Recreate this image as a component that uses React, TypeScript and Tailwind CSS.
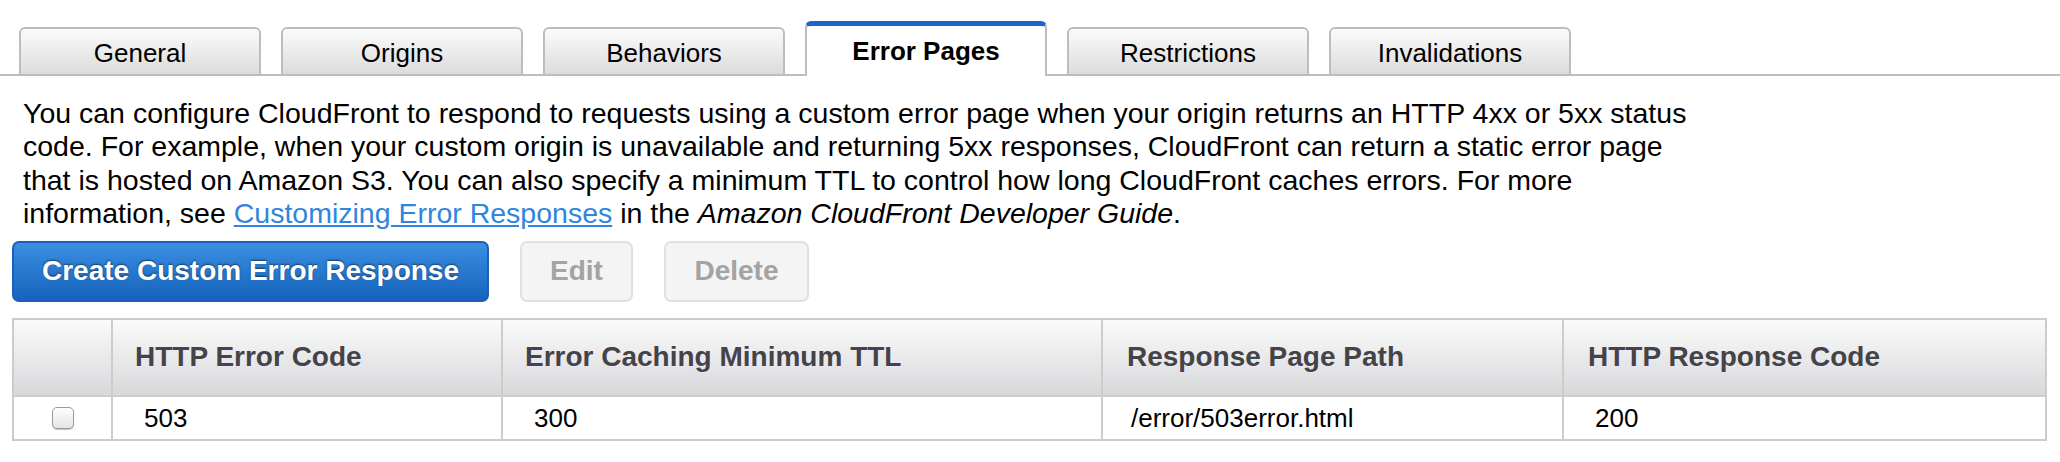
const tabs = ["General", "Origins", "Behaviors", "Error Pages", "Restrictions", "Invalidations"];

const Checkbox = () => (
  <span className="block w-[22px] h-[22px] rounded-[5px] border border-[#9a9a9a] bg-linear-to-b from-[#ffffff] to-[#e4e4e4] shadow-[0_1px_1px_rgba(0,0,0,0.25)]" />
);

const App = () => {
  return (
    <div className="w-[2060px] h-[462px] bg-white overflow-hidden font-['Liberation_Sans',Arial,sans-serif] text-black">
      {/* tabs */}
      <div className="flex items-end gap-[20px] pl-[19px] pt-[21px] border-b-2 border-[#bdbdbd]">
        {tabs.map((t) =>
          t === "Error Pages" ? (
            <div
              key={t}
              className="w-[242px] h-[55px] -mb-[2px] flex items-center justify-center bg-white border-x-2 border-[#bdbdbd] border-t-[5px] border-t-[#1b67c9] rounded-t-[6px] text-[26px] font-bold"
            >
              {t}
            </div>
          ) : (
            <div
              key={t}
              className="w-[242px] h-[49px] -mb-[2px] pt-[4px] flex items-center justify-center border-2 border-[#bdbdbd] rounded-t-[6px] bg-linear-to-b from-[#fbfbfb] to-[#dcdcdc] text-[26px]"
            >
              {t}
            </div>
          )
        )}
      </div>

      <main className="px-[12px]">
        <p className="mt-[21px] pl-[11px] max-w-[1690px] text-[28.5px] leading-[33.4px]">
          You can configure CloudFront to respond to requests using a custom error page when your origin returns an HTTP 4xx or
          5xx status code. For example, when your custom origin is unavailable and returning 5xx responses, CloudFront can return a
          static error page that is hosted on Amazon S3. You can also specify a minimum TTL to control how long CloudFront caches
          errors. For more information, see{" "}
          <a href="#" className="text-[#2f86dc] underline">
            Customizing Error Responses
          </a>{" "}
          in the <i>Amazon CloudFront Developer Guide</i>.
        </p>

        <div className="mt-[10px] flex gap-[31px]">
          <button className="w-[477px] h-[61px] rounded-[7px] border-2 border-[#1a5fb8] bg-linear-to-b from-[#3a8fe0] to-[#1663bd] text-white text-[28px] font-bold [text-shadow:0_-1px_2px_rgba(0,0,0,0.55)]">
            Create Custom Error Response
          </button>
          <button className="w-[113px] h-[61px] rounded-[7px] border-2 border-[#e0e0e0] bg-[#f4f4f4] text-[#a3a3a3] text-[28px] font-bold">
            Edit
          </button>
          <button className="w-[145px] h-[61px] rounded-[7px] border-2 border-[#e0e0e0] bg-[#f4f4f4] text-[#a3a3a3] text-[28px] font-bold">
            Delete
          </button>
        </div>

        <table className="mt-[16px] w-[2035px] border-collapse border-2 border-[#cccccc] table-fixed">
          <colgroup>
            <col className="w-[99px]" />
            <col className="w-[390px]" />
            <col className="w-[600px]" />
            <col className="w-[461px]" />
            <col />
          </colgroup>
          <thead>
            <tr className="h-[77px] bg-linear-to-b from-[#fbfbfb] to-[#d7d8da] text-left text-[28px] font-bold text-[#444] [text-shadow:1px_1px_1px_#ece8ff]">
              <th className="border-2 border-[#cccccc]" />
              <th className="border-2 border-[#cccccc] pl-[22px]">HTTP Error Code</th>
              <th className="border-2 border-[#cccccc] pl-[22px]">Error Caching Minimum TTL</th>
              <th className="border-2 border-[#cccccc] pl-[24px]">Response Page Path</th>
              <th className="border-2 border-[#cccccc] pl-[24px]">HTTP Response Code</th>
            </tr>
          </thead>
          <tbody>
            <tr className="h-[44px] text-[26px] leading-[30px]">
              <td className="border-2 border-[#cccccc] p-0">
                <div className="flex justify-center">
                  <Checkbox />
                </div>
              </td>
              <td className="border-2 border-[#cccccc] pl-[31px] py-0">503</td>
              <td className="border-2 border-[#cccccc] pl-[31px] py-0">300</td>
              <td className="border-2 border-[#cccccc] pl-[28px] py-0">/error/503error.html</td>
              <td className="border-2 border-[#cccccc] pl-[31px] py-0">200</td>
            </tr>
          </tbody>
        </table>
      </main>
    </div>
  );
};

export default App;
